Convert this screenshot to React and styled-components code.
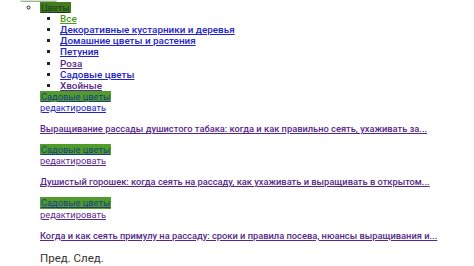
import styled, { createGlobalStyle } from "styled-components";

const Global = createGlobalStyle`
  body {
    margin: 0;
    font-family: Roboto, "Noto Sans", sans-serif;
    font-size: 9.3px;
    line-height: 11.1px;
    color: #222;
    background: #fff;
    overflow: hidden;
  }
`;

const Page = styled.div`
  margin-top: -9px;
`;

const List = styled.ul`
  margin: 0;
  padding-left: 20px;
  list-style-type: ${(p) => p.$type || "disc"};
`;

const Item = styled.li`
  margin: 0;
`;

const Link = styled.a`
  color: ${(p) => (p.$visited ? "#5a2a8e" : p.$active ? "#4a9a1a" : "#2323c8")};
  font-size: 9.9px;
  font-weight: 500;
  text-decoration: underline;
`;

const Label = styled.a`
  display: inline-block;
  background: ${(p) => p.$bg || "#4f9d28"};
  color: ${(p) => p.$color || "#1d3a8a"};
  text-decoration: underline;
  padding: 0 1px;
`;

const Card = styled.div`
  margin-left: 40px;
`;

const Edit = styled.a`
  display: block;
  color: ${(p) => (p.$visited ? "#5a2a8e" : "#2323c8")};
  text-decoration: underline;
`;

const Title = styled.a`
  display: block;
  margin: 10px 0;
  color: #56288a;
  font-weight: 500;
  text-decoration: underline;
`;

const Pager = styled.div`
  margin: 9px 0 0 40px;
  font-size: 11.5px;
  line-height: 14px;
  color: #333;
`;

const subs = [
  { t: "Все", active: true },
  { t: "Декоративные кустарники и деревья" },
  { t: "Домашние цветы и растения" },
  { t: "Петуния" },
  { t: "Роза", visited: true },
  { t: "Садовые цветы" },
  { t: "Хвойные", visited: true },
];

const posts = [
  {
    title:
      "Выращивание рассады душистого табака: когда и как правильно сеять, ухаживать за...",
  },
  {
    title:
      "Душистый горошек: когда сеять на рассаду, как ухаживать и выращивать в открытом...",
    visited: true,
  },
  {
    title:
      "Когда и как сеять примулу на рассаду: сроки и правила посева, нюансы выращивания и...",
    visited: true,
  },
];

export default function App() {
  return (
    <Page>
      <Global />
      <List $type="disc">
        <Item>
          <Label $bg="#d4e8c6" $color="#a4aea4">
            Главная
          </Label>
          <List $type="circle">
            <Item>
              <Label $bg="#3f7d1e" $color="#1f3a20">
                Цветы
              </Label>
              <List $type="square">
                {subs.map((s) => (
                  <Item key={s.t}>
                    <Link $active={s.active} $visited={s.visited} href="#">
                      {s.t}
                    </Link>
                  </Item>
                ))}
              </List>
            </Item>
          </List>
        </Item>
      </List>
      {posts.map((p, i) => (
        <Card key={i}>
          <Label>Садовые цветы</Label>
          <Edit $visited={p.visited} href="#">
            редактировать
          </Edit>
          <Title href="#">{p.title}</Title>
        </Card>
      ))}
      <Pager>Пред. След.</Pager>
    </Page>
  );
}
